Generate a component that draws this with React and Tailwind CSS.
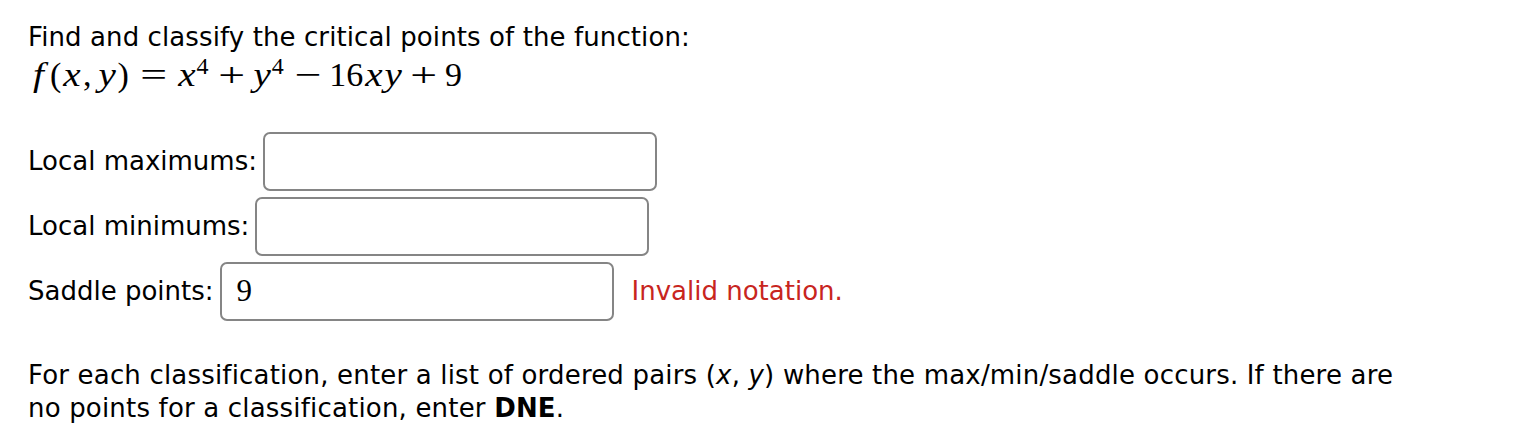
const sans = { fontFamily: '"DejaVu Sans", "Liberation Sans", sans-serif' };
const serif = "font-['Liberation_Serif',serif]";

// math tokens laid out on TeX-like advances: [text, width, space before, kind]
// kind: i = italic letter, s = superscript, o = operator
const formula = [
  ['f', 20.9, 0, 'i'],
  ['(', 13.6, 0],
  ['x', 20, 0, 'i'],
  [',', 9.7, 0],
  ['y', 18.4, 5.8, 'i'],
  [')', 13.6, 0],
  ['=', 27.2, 9.7, 'o'],
  ['x', 20, 9.7, 'i'],
  ['4', 12.4, 0, 's'],
  ['+', 27.2, 9.5, 'o'],
  ['y', 18.4, 7.8, 'i'],
  ['4', 12.4, 0, 's'],
  ['−', 27.2, 9.5, 'o'],
  ['16', 35, 7.8],
  ['x', 20, 0, 'i'],
  ['y', 18.4, 0, 'i'],
  ['+', 27.2, 7.8, 'o'],
  ['9', 17.5, 7.8],
];

const tokenClass = {
  i: 'italic scale-x-[1.15]',
  s: 'text-[24px] align-[12px] text-left',
  o: 'scale-x-[1.4]',
};

const Row = ({ label, value, note }) => (
  <div className="flex items-center h-[59px] mt-[6px]">
    <span className="whitespace-nowrap">{label}</span>
    <div className="ml-[6px] w-[394px] h-full border-2 border-[#858585] rounded-[7px] bg-white flex items-center pl-[15px]">
      {value && <span className={`text-[31px] ${serif} text-black`}>{value}</span>}
    </div>
    {note && <span className="ml-[18px] text-[#c8251e] whitespace-nowrap">{note}</span>}
  </div>
);

export default function App() {
  return (
    <div className="w-[1540px] h-[424px] bg-white text-black text-[26px] pl-[28px] pt-[20px]" style={sans}>
      {/* Prompt */}
      <div className="leading-[34px] whitespace-nowrap tracking-[0.1px]">
        Find and classify the critical points of the function:
      </div>
      <div className={`h-[42px] leading-[42px] text-[34px] ${serif} whitespace-nowrap`}>
        {formula.map(([t, w, ml, kind], i) => (
          <span
            key={i}
            className={`inline-block text-center leading-none ${kind ? tokenClass[kind] : ''}`}
            style={{ width: w, marginLeft: ml }}
          >
            {t}
          </span>
        ))}
      </div>

      {/* Answer boxes */}
      <div className="mt-[36px]">
        <Row label="Local maximums:" />
        <Row label="Local minimums:" />
        <Row label="Saddle points:" value="9" note="Invalid notation." />
      </div>

      {/* Instructions */}
      <div className="mt-[38px] leading-[33px] tracking-[0.18px]">
        <div className="whitespace-nowrap">
          For each classification, enter a list of ordered pairs (<i>x</i>, <i>y</i>) where the max/min/saddle occurs. If there are
        </div>
        <div className="whitespace-nowrap">
          no points for a classification, enter <b>DNE</b>.
        </div>
      </div>
    </div>
  );
}
